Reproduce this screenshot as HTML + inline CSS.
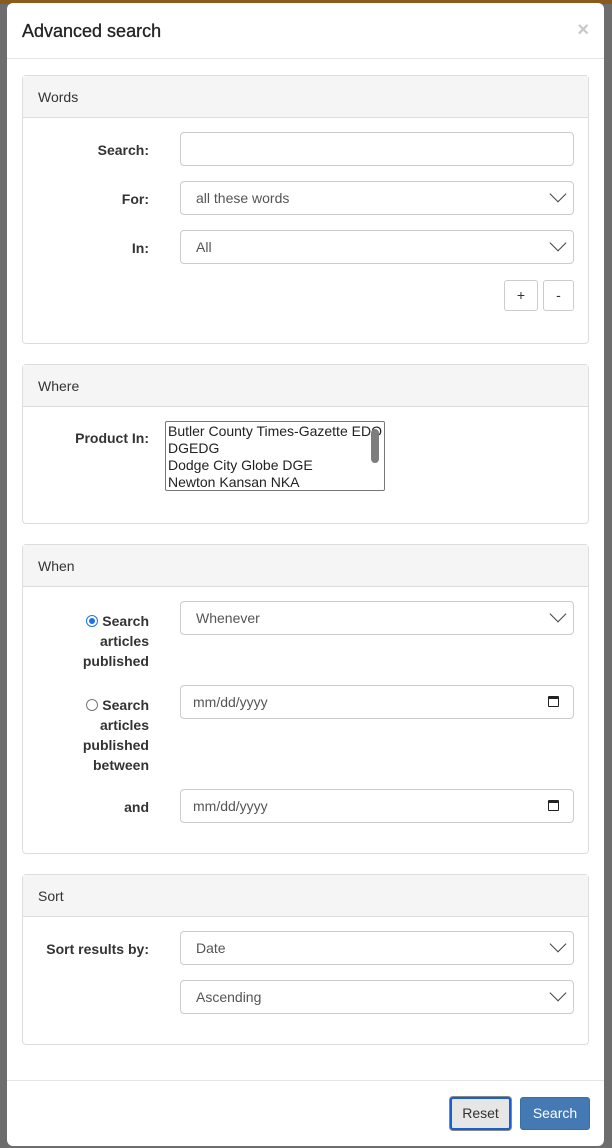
<!DOCTYPE html>
<html><head><style>
*{box-sizing:border-box}
body{margin:0;width:612px;height:1148px;background:#6d6d6d;font-family:"Liberation Sans",sans-serif;font-size:14px;color:#333;position:relative;overflow:hidden}
.top{position:absolute;left:0;top:0;width:612px;height:4px;background:#8a5a1a}
.modal{position:absolute;left:7px;top:3px;width:597px;height:1143px;background:#fff;border-radius:6px}
.hdr{height:56px;border-bottom:1px solid #e5e5e5;position:relative}
.hdr h4{margin:0;position:absolute;left:15px;top:18px;font-size:18px;font-weight:normal;color:#222;-webkit-text-stroke:0.3px #222}
.x{position:absolute;right:15px;top:16px;font-size:20px;color:#c8c8c8;font-weight:bold}
.panel{position:absolute;left:15px;width:567px;border:1px solid #ddd;border-radius:4px;background:#fff}
.ph{height:42px;background:#f5f5f5;border-bottom:1px solid #ddd;padding:13px 15px;font-size:14px}
.lbl{position:absolute;right:439px;font-weight:bold;text-align:right;line-height:20px}
.inp{position:absolute;left:157px;width:394px;height:34px;border:1px solid #ccc;border-radius:4px;padding:0 15px;line-height:32px;color:#555}
.sel::after{content:"";position:absolute;right:9px;top:6px;width:11px;height:11px;border-right:1.5px solid #444;border-bottom:1.5px solid #444;transform:rotate(45deg)}
.cal{position:absolute;right:14px;top:10px;width:11px;height:11px;border:1.5px solid #222;border-top-width:3px;border-radius:1px}
.btn{position:absolute;height:31px;border:1px solid #ccc;border-radius:3px;background:#fff;text-align:center;line-height:29px}
</style></head><body>
<div class="top"></div>
<div class="modal">
<div class="hdr"><h4>Advanced search</h4><span class="x">×</span></div>
<div class="panel" style="top:72px;height:269px">
<div class="ph">Words</div>
<div class="lbl" style="top:64px">Search:</div><div class="inp" style="top:56px"></div>
<div class="lbl" style="top:113px">For:</div><div class="inp sel" style="top:105px">all these words</div>
<div class="lbl" style="top:162px">In:</div><div class="inp sel" style="top:154px">All</div>
<div class="btn" style="left:481px;top:204px;width:34px">+</div>
<div class="btn" style="left:520px;top:204px;width:31px">-</div>
</div>
<div class="panel" style="top:361px;height:160px">
<div class="ph">Where</div>
<div class="lbl" style="top:63px">Product In:</div>
<div style="position:absolute;left:142px;top:56px;width:220px;height:70px;border:1px solid #777;border-radius:2px;padding:1px 2px;line-height:17px;font-size:14px;color:#222;overflow:hidden">Butler County Times-Gazette EDO<br>DGEDG<br>Dodge City Globe DGE<br>Newton Kansan NKA
<div style="position:absolute;right:5px;top:7px;width:8px;height:34px;background:#7d7d7d;border-radius:4px"></div></div>
</div>
<div class="panel" style="top:541px;height:310px">
<div class="ph">When</div>
<div class="lbl" style="top:66px">
<span style="display:inline-block;width:12px;height:12px;border:1px solid #1a73e8;border-radius:50%;vertical-align:-1px;position:relative"><span style="position:absolute;left:2px;top:2px;width:6px;height:6px;border-radius:50%;background:#1a73e8"></span></span> Search<br>articles<br>published</div>
<div class="inp sel" style="top:56px">Whenever</div>
<div class="lbl" style="top:150px"><span style="display:inline-block;width:12px;height:12px;border:1px solid #777;border-radius:50%;vertical-align:-1px"></span> Search<br>articles<br>published<br>between</div>
<div class="inp" style="top:140px;padding-left:12px">mm/dd/yyyy<span class="cal"></span></div>
<div class="lbl" style="top:252px">and</div>
<div class="inp" style="top:244px;padding-left:12px">mm/dd/yyyy<span class="cal"></span></div>
</div>
<div class="panel" style="top:871px;height:171px">
<div class="ph">Sort</div>
<div class="lbl" style="top:64px">Sort results by:</div>
<div class="inp sel" style="top:56px">Date</div>
<div class="inp sel" style="top:105px">Ascending</div>
</div>
<div style="position:absolute;left:0;top:1077px;width:597px;border-top:1px solid #e5e5e5"></div>
<div class="btn" style="left:443px;top:1094px;width:61px;height:33px;background:#e6e6e6;border:2px solid #1a5fd0;box-shadow:0 0 0 1px #888;line-height:29px">Reset</div>
<div class="btn" style="left:513px;top:1094px;width:70px;height:33px;background:#4479b3;border-color:#3c6ea6;color:#fff;line-height:31px">Search</div>
</div>
</body></html>
